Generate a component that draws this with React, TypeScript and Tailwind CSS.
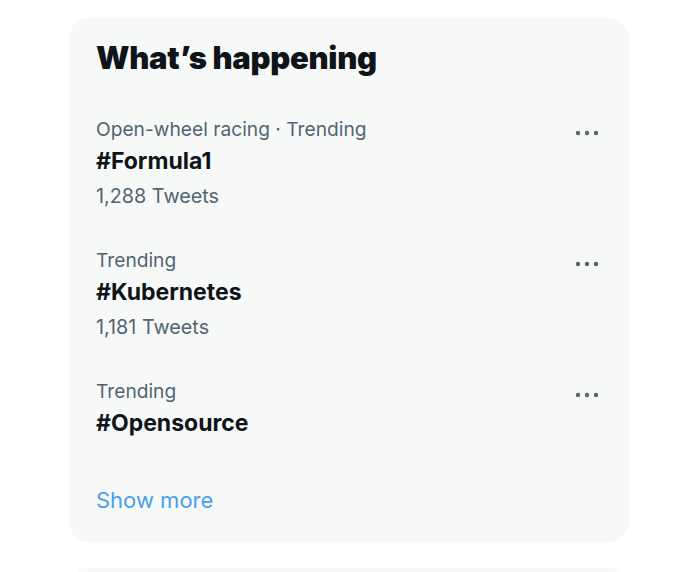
import React from "react";

const trends = [
  { cat: "Open-wheel racing · Trending", title: "#Formula1", count: "1,288 Tweets" },
  { cat: "Trending", title: "#Kubernetes", count: "1,181 Tweets" },
  { cat: "Trending", title: "#Opensource", count: "" },
];

function Dots() {
  return (
    <svg width="24" height="8" viewBox="0 0 24 8" className="block">
      <circle cx="3" cy="4" r="2.2" fill="#536471" />
      <circle cx="12" cy="4" r="2.2" fill="#536471" />
      <circle cx="21" cy="4" r="2.2" fill="#536471" />
    </svg>
  );
}

export default function App() {
  return (
    <div className="h-[572px] bg-white overflow-hidden" style={{ fontFamily: "Inter, 'Noto Sans', sans-serif" }}>
      <div className="mx-auto w-[560px] pt-[18px]">
        <div className="rounded-[20px] bg-[#f7f9f9]">
          <div className="pl-[27px] pt-[22px] pb-[25px]">
            <h2 className="text-[31px] leading-[36px] font-black text-[#0f1419] tracking-[-0.3px]">What’s happening</h2>
          </div>
          {trends.map((t) => (
            <div key={t.title} className="flex items-start justify-between pl-[27px] pr-[30px] pt-[14px] pb-[19px]">
              <div className="flex flex-col">
                <span className="text-[19.2px] leading-[28px] text-[#536471]">{t.cat}</span>
                <span className="text-[23px] leading-[36px] font-bold text-[#0f1419]">{t.title}</span>
                {t.count && <span className="text-[19.8px] leading-[34px] text-[#536471]">{t.count}</span>}
              </div>
              <div className="pt-[14px]">
                <Dots />
              </div>
            </div>
          ))}
          <div className="pl-[27px] pt-[26px] pb-[28px]">
            <span className="text-[22px] leading-[28px] text-[#4a9eec]">Show more</span>
          </div>
        </div>
        <div className="mt-[26px] h-[100px] rounded-[20px] bg-[#f7f9f9]" />
      </div>
    </div>
  );
}
